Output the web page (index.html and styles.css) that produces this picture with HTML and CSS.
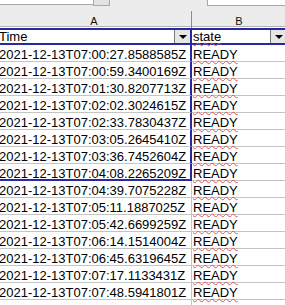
FILE: index.html
```html
<!DOCTYPE html>
<html>
<head>
<meta charset="utf-8">
<link rel="stylesheet" href="styles.css">
</head>
<body>
<div class="toolbar">
  <div class="namebox"></div>
  <div class="nbtn"></div>
  <div class="formula"></div>
</div>
<div class="sheet">
  <div class="colhdr">
    <div class="ch ca">A</div>
    <div class="ch cb">B</div>
  </div>
  <div class="gap"></div>
  <div class="grid">
    <div class="cell a hdr"><span class="txt">Time</span><i class="dd"></i></div>
    <div class="cell b hdr"><span class="txt"><span class="sp">state</span></span><i class="dd"></i></div>

    <div class="cell a sel">2021-12-13T07:00:27.8588585Z</div><div class="cell b"><span class="sp">READY</span></div>
    <div class="cell a sel">2021-12-13T07:00:59.3400169Z</div><div class="cell b"><span class="sp">READY</span></div>
    <div class="cell a sel">2021-12-13T07:01:30.8207713Z</div><div class="cell b"><span class="sp">READY</span></div>
    <div class="cell a sel">2021-12-13T07:02:02.3024615Z</div><div class="cell b"><span class="sp">READY</span></div>
    <div class="cell a sel">2021-12-13T07:02:33.7830437Z</div><div class="cell b"><span class="sp">READY</span></div>
    <div class="cell a sel">2021-12-13T07:03:05.2645410Z</div><div class="cell b"><span class="sp">READY</span></div>
    <div class="cell a sel">2021-12-13T07:03:36.7452604Z</div><div class="cell b"><span class="sp">READY</span></div>
    <div class="cell a sel last">2021-12-13T07:04:08.2265209Z</div><div class="cell b"><span class="sp">READY</span></div>
    <div class="cell a">2021-12-13T07:04:39.7075228Z</div><div class="cell b"><span class="sp">READY</span></div>
    <div class="cell a">2021-12-13T07:05:11.1887025Z</div><div class="cell b"><span class="sp">READY</span></div>
    <div class="cell a">2021-12-13T07:05:42.6699259Z</div><div class="cell b"><span class="sp">READY</span></div>
    <div class="cell a">2021-12-13T07:06:14.1514004Z</div><div class="cell b"><span class="sp">READY</span></div>
    <div class="cell a">2021-12-13T07:06:45.6319645Z</div><div class="cell b"><span class="sp">READY</span></div>
    <div class="cell a">2021-12-13T07:07:17.1133431Z</div><div class="cell b"><span class="sp">READY</span></div>
    <div class="cell a">2021-12-13T07:07:48.5941801Z</div><div class="cell b"><span class="sp">READY</span></div>
    <div class="cell a"></div><div class="cell b"></div>
  </div>
</div>
</body>
</html>
```

FILE: styles.css
```css
* { box-sizing: border-box; }
html, body {
  margin: 0;
  padding: 0;
  background: #ffffff;
  width: 285px;
  height: 305px;
  overflow: hidden;
  font-family: "Liberation Sans", Arial, sans-serif;
}
.toolbar {
  height: 9px;
  background: #ececec;
  display: flex;
  align-items: flex-start;
}
.namebox {
  width: 93px;
  height: 5px;
  background: #ffffff;
  border-bottom: 1px solid #a8a8a8;
}
.nbtn {
  width: 17px;
  height: 6px;
  background: #e2e2e2;
  border: 1px solid #a8a8a8;
  border-top: none;
}
.formula {
  margin-left: auto;
  width: 78px;
  height: 6px;
  background: #ffffff;
  border-left: 1px solid #a8a8a8;
  border-bottom: 1px solid #a8a8a8;
}
.sheet {
  margin-left: -3px;
  width: 300px;
}
.colhdr {
  display: grid;
  grid-template-columns: 195px 94px;
  height: 18px;
  background: #ececec;
  border-bottom: 1px solid #b4b4b4;
}
.ch {
  font-size: 11px;
  line-height: 13px;
  padding-top: 4px;
  text-align: center;
  color: #111;
}
.ca {
  border-right: 1px solid #8c8c8c;
  margin-top: 2px;
}
.cb { margin-top: 2px; }
.gap { height: 1px; }
.grid {
  display: grid;
  grid-template-columns: 195px 94px;
  grid-auto-rows: 17px;
}
.cell {
  font-size: 13px;
  line-height: 16px;
  padding-top: 2px;
  white-space: nowrap;
  color: #000;
  border-bottom: 1px solid #c4c4c4;
}
.cell.a {
  padding-left: 2px;
  border-right: 1px solid #c4c4c4;
}
.cell.b { padding-left: 1px; }
.cell.a.sel { border-right: 2px solid #2828a0; }
.cell.a.last { border-bottom: 2px solid #2828a0; }
.cell.hdr {
  display: flex;
  align-items: stretch;
  padding-top: 0;
  line-height: 13px;
  border-top: 2px solid #2828a0;
  border-bottom: 2px solid #2828a0;
}
.cell.a.hdr { border-right: 2px solid #2828a0; }
.txt { flex: 1; }
.sp {
  text-decoration: underline wavy #dc5a5a;
  text-decoration-thickness: 1px;
  text-underline-offset: 1px;
}
.dd {
  width: 16px;
  background: #e6e6e6;
  border-left: 1px solid #7a7a7a;
  display: flex;
  align-items: center;
  justify-content: center;
}
.dd::after {
  content: "";
  width: 0;
  height: 0;
  border-left: 4px solid transparent;
  border-right: 4px solid transparent;
  border-top: 4px solid #000;
}
```
